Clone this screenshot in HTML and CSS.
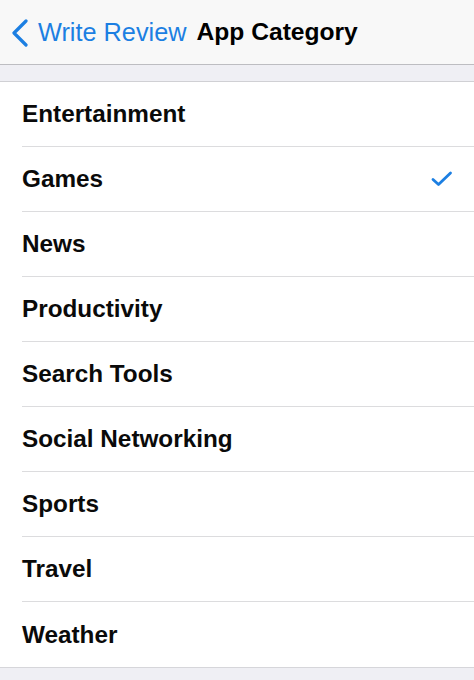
FILE: index.html
```html
<!DOCTYPE html>
<html>
<head>
<title>App Category</title>
<link rel="stylesheet" href="styles.css">
</head>
<body>
<div class="navbar">
	<a class="back" href="#">
		<svg class="chev" width="18" height="28" viewBox="0 0 18 28"><path d="M15 2 L3 14 L15 26" fill="none" stroke="#1c7fe2" stroke-width="3.2" stroke-linecap="round" stroke-linejoin="round"/></svg>
		<span>Write Review</span>
	</a>
	<span class="title">App Category</span>
</div>
<div class="gap"></div>
<ul class="list">
	<li><span>Entertainment</span></li>
	<li><span>Games</span><svg class="check" width="22" height="16" viewBox="0 0 22 16"><path d="M2 8.5 L7.5 13.5 L19.5 2" fill="none" stroke="#1c7fe2" stroke-width="2.8" stroke-linecap="round" stroke-linejoin="round"/></svg></li>
	<li><span>News</span></li>
	<li><span>Productivity</span></li>
	<li><span>Search Tools</span></li>
	<li><span>Social Networking</span></li>
	<li><span>Sports</span></li>
	<li><span>Travel</span></li>
	<li><span>Weather</span></li>
</ul>
</body>
</html>
```

FILE: styles.css
```css
html {
	background: #efeff4;
}
body {
	margin: 0;
	padding: 0;
	font-family: "Liberation Sans", Arial, sans-serif;
	background: #efeff4;
	height: 680px;
	overflow: hidden;
}
.navbar {
	background: #f8f8f8;
	border-bottom: 1px solid #bdbdc1;
	display: flex;
	align-items: center;
	padding-left: 11px;
	box-sizing: border-box;
	height: 65px;
}
.back {
	display: flex;
	align-items: center;
	color: #1c7fe2;
	text-decoration: none;
	font-size: 25.3px;
}
.chev {
	margin-right: 9px;
	margin-top: 1px;
}
.title {
	margin-left: 10px;
	font-size: 24.6px;
	font-weight: bold;
	color: #000;
}
.gap {
	height: 16px;
	border-bottom: 1px solid #d0d0d4;
}
.list {
	list-style: none;
	margin: 0;
	padding: 0 0 0 22px;
	background: #fff;
	border-bottom: 1px solid #d6d6da;
}
.list li {
	height: 65px;
	display: flex;
	align-items: center;
	justify-content: space-between;
	padding-right: 20px;
	border-bottom: 1px solid #dcdcde;
	box-sizing: border-box;
	font-size: 24.3px;
	font-weight: bold;
	color: #0a0a0a;
}
.list li:last-child {
	border-bottom: none;
}
.check {
	margin-right: 1px;
}
```
